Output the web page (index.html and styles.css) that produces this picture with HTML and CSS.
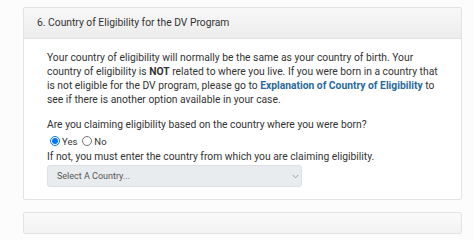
FILE: index.html
```html
<!DOCTYPE html>
<html lang="en">
<head>
<meta charset="utf-8">
<title>Country of Eligibility</title>
<link rel="stylesheet" href="styles.css">
</head>
<body>
<div class="page">
  <section class="panel">
    <div class="panel-heading">6. Country of Eligibility for the DV Program</div>
    <div class="panel-body">
      <p class="intro">Your country of eligibility will normally be the same as your country of birth. Your country of eligibility is <strong>NOT</strong> related to where you live. If you were born in a country that is not eligible for the DV program, please go to <a href="#" class="link">Explanation of Country of Eligibility</a> to see if there is another option available in your case.</p>
      <p class="question">Are you claiming eligibility based on the country where you were born?</p>
      <div class="radios">
        <label class="radio"><input type="radio" name="born" checked> Yes</label>
        <label class="radio"><input type="radio" name="born"> No</label>
      </div>
      <p class="question">If not, you must enter the country from which you are claiming eligibility.</p>
      <div class="select">
        <span class="select-text">Select A Country...</span>
        <svg class="chev" width="7" height="5" viewBox="0 0 7 5"><path d="M0.8 1 L3.5 3.8 L6.2 1" fill="none" stroke="#999" stroke-width="0.9"/></svg>
      </div>
    </div>
  </section>
  <section class="panel panel-next"></section>
</div>
</body>
</html>
```
FILE: styles.css
```css
html, body {
  margin: 0;
  padding: 0;
  background: #fcfcfc;
}
body {
  font-family: Roboto, "Liberation Sans", Arial, sans-serif;
  font-size: 10.3px;
  color: #333;
}
.page {
  padding: 7px 12px 0 23px;
  display: flex;
  flex-direction: column;
  gap: 12px;
}
.panel {
  border: 1px solid #e3e3e3;
  border-radius: 2px;
  background: #fff;
  width: 437px;
}
.panel-heading {
  height: 31px;
  box-sizing: border-box;
  padding: 8px 13px 0;
  line-height: 13px;
  background: linear-gradient(#f8f8f8, #ececec);
  border-bottom: 1px solid #e2e2e2;
  font-size: 10.3px;
  color: #333;
}
.panel-body {
  padding: 12px 23px 12px 23px;
}
p {
  margin: 0;
}
.intro {
  line-height: 14px;
  margin-bottom: 11px;
}
.question {
  line-height: 14px;
}
.link {
  color: #2a6a9e;
  font-weight: bold;
  text-decoration: none;
}
.radios {
  display: flex;
  align-items: center;
  gap: 2px;
  height: 18px;
  font-size: 9.5px;
}
.radio {
  display: flex;
  align-items: center;
  gap: 2px;
}
.radio input {
  width: 10px;
  height: 10px;
  margin: 0 0 0 3px;
}
.select {
  margin-top: 1px;
  width: 255px;
  height: 22px;
  box-sizing: border-box;
  background: #e9ecef;
  border: 1px solid #dde1e5;
  border-radius: 3px;
  display: flex;
  align-items: center;
  justify-content: space-between;
  padding: 0 2px 0 9px;
  font-size: 9px;
  color: #555;
}
.panel-next {
  height: 20px;
  background: linear-gradient(#fafafa, #f2f2f2);
}
```
